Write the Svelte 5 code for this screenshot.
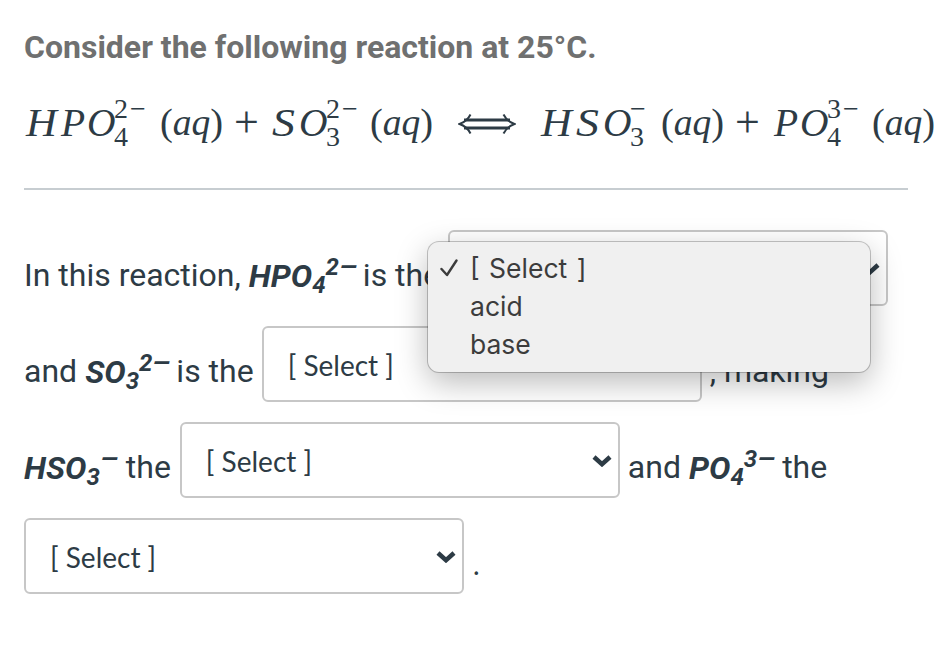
<script lang="ts">
    const options = ['[ Select ]', 'acid', 'base'];
    let selected = '[ Select ]';
</script>

{#snippet dropdown()}
    <div class="dropdown">
        <select bind:value={selected} aria-label="Answer">
            {#each options as option}
                <option value={option}>{option}</option>
            {/each}
        </select>
        <svg class="chevron" viewBox="0 0 20 12" width="20" height="12">
            <path d="M2 2 L10 9.2 L18 2" />
        </svg>
    </div>
{/snippet}

{#snippet scripts(sup, sub)}
    <span class="scripts"><span>{sup}</span><span>{sub}</span></span>
{/snippet}

<main>
    <h1>Consider the following reaction at 25°C.</h1>

    <div class="equation">
        <span class="term"><i class="h">H</i><i class="p">P</i><i class="o">O</i>{@render scripts('2−', '4')}</span>
        <span class="state">(<i>aq</i>)</span>
        <span class="plus">+</span>
        <span class="term"><i class="s">S</i><i class="o">O</i>{@render scripts('2−', '3')}</span>
        <span class="state">(<i>aq</i>)</span>
        <svg class="arrow" viewBox="0 0 58 24" width="58" height="24">
            <path d="M6 8 H52 M6 16 H52" />
            <path class="head" d="M12.5 2.5 C10 7.5 6 10.5 1.5 12 C6 13.5 10 16.5 12.5 21.5 M45.5 2.5 C48 7.5 52 10.5 56.5 12 C52 13.5 48 16.5 45.5 21.5" />
        </svg>
        <span class="term"><i class="h">H</i><i class="s">S</i><i class="o">O</i>{@render scripts('−', '3')}</span>
        <span class="state">(<i>aq</i>)</span>
        <span class="plus">+</span>
        <span class="term"><i class="p">P</i><i class="o">O</i>{@render scripts('3−', '4')}</span>
        <span class="state">(<i>aq</i>)</span>
    </div>

    <hr />

    <div class="question">
        <div class="row">
            <span class="intro">In this reaction,</span>
            <span class="ion">HPO<sub>4</sub><sup>2<span class="dash">–</span></sup></span>
            <span class="is">is the</span>
            {@render dropdown()}
            <ul class="menu">
                {#each options as option}
                    <li>
                        <span class="tick">
                            {#if option === selected}
                                <svg viewBox="0 0 18 18" width="18" height="18"><path d="M1.5 10 L7 16 L16.5 1.5" /></svg>
                            {/if}
                        </span>
                        {option}
                    </li>
                {/each}
            </ul>
        </div>
        <div class="row">
            <span class="and">and</span>
            <span class="ion">SO<sub>3</sub><sup>2<span class="dash">–</span></sup></span>
            <span class="is">is the</span>
            {@render dropdown()}
            <span class="making">, making</span>
        </div>
        <div class="row">
            <span class="ion">HSO<sub>3</sub><sup><span class="dash single">–</span></sup></span>
            <span class="the">the</span>
            {@render dropdown()}
            <span class="and after">and</span>
            <span class="ion">PO<sub>4</sub><sup>3<span class="dash">–</span></sup></span>
            <span class="last">the</span>
        </div>
        <div class="row">
            {@render dropdown()}
            <span class="period">.</span>
        </div>
    </div>
</main>

<style>
    :global(body) {
        margin: 0;
        background: #fff;
    }

    main {
        box-sizing: border-box;
        width: 944px;
        height: 670px;
        padding: 28px 0 0 24px;
        overflow: hidden;
        color: #2d3b45;
        font-family: Roboto, sans-serif;
        font-size: 32px;
    }

    h1 {
        margin: 0;
        color: #6f7070;
        font-size: 32px;
        font-weight: 700;
        line-height: 38px;
        white-space: nowrap;
    }

    .equation {
        display: grid;
        grid-template-columns: 134px 74px 38px 98px 87px 84px 120px 74px 39px 98px 64px;
        align-items: center;
        height: 76px;
        margin-top: 18px;
        padding-left: 2px;
        font-family: "Liberation Serif", serif;
        font-size: 39.5px;
        line-height: 76px;
        white-space: nowrap;
    }

    .term {
        display: flex;
        align-items: center;
    }

    .term i {
        display: inline-block;
    }

    .h {
        width: 35px;
        transform: scaleX(1.08);
        transform-origin: left;
    }

    .p {
        width: 26px;
    }

    .s {
        width: 27px;
        transform: scaleX(1.16);
        transform-origin: left;
    }

    .o {
        width: 27px;
    }

    .scripts {
        display: flex;
        flex-direction: column;
        font-size: 28px;
        line-height: 28px;
        letter-spacing: 2px;
    }

    .state {
        font-size: 38.5px;
    }

    .state i {
        font-size: 37.5px;
    }

    .plus {
        font-size: 44px;
    }

    .arrow {
        margin: 2px 0 0 1px;
    }

    .arrow path {
        fill: none;
        stroke: #2d3b45;
        stroke-width: 2.8;
    }

    .arrow .head {
        stroke-width: 2;
    }

    hr {
        width: 884px;
        height: 2px;
        margin: 28px 0 0;
        border: 0;
        background: #c7cdd1;
    }

    .question {
        display: flex;
        flex-direction: column;
        gap: 20px;
        margin-top: 40px;
    }

    .row {
        position: relative;
        display: flex;
        height: 76px;
        line-height: 90px;
        white-space: nowrap;
    }

    .ion {
        padding-top: 1px;
        margin: 0 6px 0 8px;
        font-style: italic;
        font-weight: 700;
    }

    .row > .ion:first-child {
        margin-left: 0;
    }

    sub,
    sup {
        position: relative;
        font-size: 24px;
        line-height: 0;
        vertical-align: baseline;
    }

    sub {
        bottom: -6px;
    }

    sup {
        bottom: 12px;
    }

    .dash {
        display: inline-block;
        width: 18px;
        transform: scaleX(1.25);
        transform-origin: left;
    }

    .single {
        width: 20px;
    }

    .is {
        margin-right: 8px;
    }

    .the {
        margin-right: 9px;
    }

    .after {
        margin-left: 8px;
    }

    .last {
        margin-left: 1px;
    }

    .making {
        margin-left: 8px;
    }

    .period {
        margin-left: 9px;
        font-family: Lato, sans-serif;
        font-size: 28px;
        line-height: 92px;
    }

    .dropdown {
        position: relative;
        flex: none;
        width: 440px;
        height: 76px;
    }

    select {
        display: block;
        box-sizing: border-box;
        width: 100%;
        height: 100%;
        padding: 2px 24px 0 24px;
        border: 2px solid #c7c7c7;
        border-radius: 6px;
        appearance: none;
        background: #fff;
        color: #2d3b45;
        font-family: Lato, sans-serif;
        font-size: 28px;
    }

    .chevron {
        position: absolute;
        top: 33px;
        right: 8px;
        fill: none;
        stroke: #2d3b45;
        stroke-width: 4.5;
    }

    .menu {
        position: absolute;
        top: 12px;
        left: 404px;
        box-sizing: border-box;
        width: 442px;
        height: 130px;
        margin: 0;
        padding: 7px 0 0 12px;
        border-radius: 11px;
        background: #f0f0f0;
        box-shadow: 0 0 0 1px rgba(0, 0, 0, 0.22), 0 10px 32px rgba(0, 0, 0, 0.28);
        color: #3c3c3c;
        font-family: Inter, sans-serif;
        font-size: 26.5px;
        line-height: 38px;
        word-spacing: 2px;
        list-style: none;
        z-index: 1;
    }

    .menu li {
        display: flex;
        height: 38px;
    }

    .tick {
        display: flex;
        align-items: center;
        width: 30px;
    }

    .tick path {
        fill: none;
        stroke: #3c3c3c;
        stroke-width: 2.4;
        stroke-linecap: round;
        stroke-linejoin: round;
    }
</style>
